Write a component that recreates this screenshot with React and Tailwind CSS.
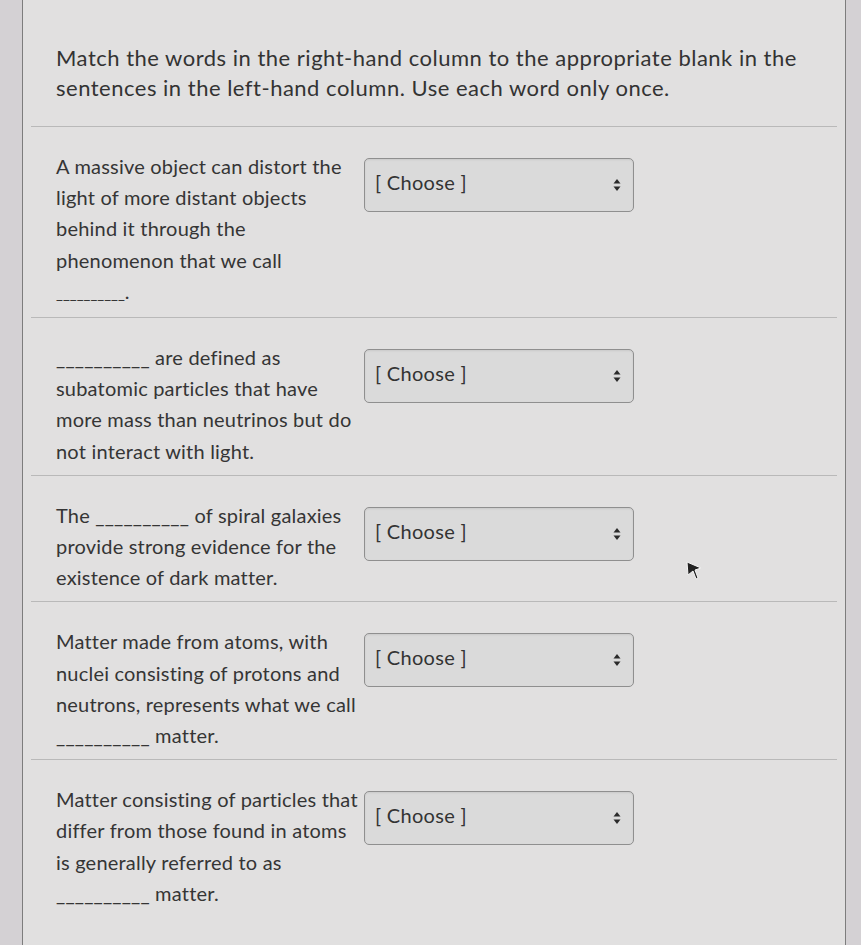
import React from "react";

function Arrows() {
  return (
    <svg width="8" height="14" viewBox="0 0 8 14" className="shrink-0">
      <path d="M4 1 L7.5 5.5 L0.5 5.5 Z" fill="#2a2a2a" />
      <path d="M4 13 L7.5 8.5 L0.5 8.5 Z" fill="#2a2a2a" />
    </svg>
  );
}

function Select() {
  return (
    <div className="mt-[7px] flex h-[54px] w-[270px] shrink-0 items-center justify-between rounded-[5px] border border-[#8f8f8f] bg-[#dadada] pl-[10px] pr-[12px] shadow-[inset_0_1px_2px_rgba(0,0,0,0.08)]">
      <span className="-mt-[6px] text-[20px] tracking-[0.3px] text-[#333]">[ Choose ]</span>
      <Arrows />
    </div>
  );
}

const B = "__________";

function Row({ lines, last }) {
  return (
    <div className={"flex gap-[6px] pt-6 pb-2 pl-[25px] " + (last ? "" : "border-b border-[#b9b9b9]")}>
      <div className="w-[302px] shrink-0 whitespace-nowrap text-[20px] leading-[31.2px] tracking-[0.2px] text-[#353535]">
        {lines.map((l, i) => (
          <div key={i}>{l}</div>
        ))}
      </div>
      <Select />
    </div>
  );
}

export default function App() {
  return (
    <div className="min-h-[945px] w-[861px] bg-[#d4d1d4] pl-[22px] pr-[15px]" style={{ fontFamily: "Lato, 'Open Sans', sans-serif" }}>
      <div className="relative min-h-[945px] border-x border-[#7d7d7d] bg-[#e1e0e0] px-[8px]">
        <div className="border-b border-[#b9b9b9] pt-[43px] pb-[23px] pl-[25px] pr-[10px] whitespace-nowrap text-[22px] leading-[30px] tracking-[0.5px] text-[#333]">
          <div>Match the words in the right-hand column to the appropriate blank in the</div>
          <div>sentences in the left-hand column. Use each word only once.</div>
        </div>
        <Row
          lines={[
            "A massive object can distort the",
            "light of more distant objects",
            "behind it through the",
            "phenomenon that we call",
            <span><span className="text-[15px] tracking-[0px]">{B}</span>.</span>,
          ]}
        />
        <Row
          lines={[
            B + " are defined as",
            "subatomic particles that have",
            "more mass than neutrinos but do",
            "not interact with light.",
          ]}
        />
        <Row
          lines={[
            "The " + B + " of spiral galaxies",
            "provide strong evidence for the",
            "existence of dark matter.",
          ]}
        />
        <Row
          lines={[
            "Matter made from atoms, with",
            "nuclei consisting of protons and",
            "neutrons, represents what we call",
            B + " matter.",
          ]}
        />
        <Row
          last
          lines={[
            "Matter consisting of particles that",
            "differ from those found in atoms",
            "is generally referred to as",
            B + " matter.",
          ]}
        />
        <svg className="absolute left-[662px] top-[560px]" width="20" height="22" viewBox="0 0 20 22">
          <path d="M2 2 L16 8 L10 10 L13 18 L11 19 L8 11 L3 15 Z" fill="#222" stroke="#f5f5f5" strokeWidth="1" />
        </svg>
      </div>
    </div>
  );
}
